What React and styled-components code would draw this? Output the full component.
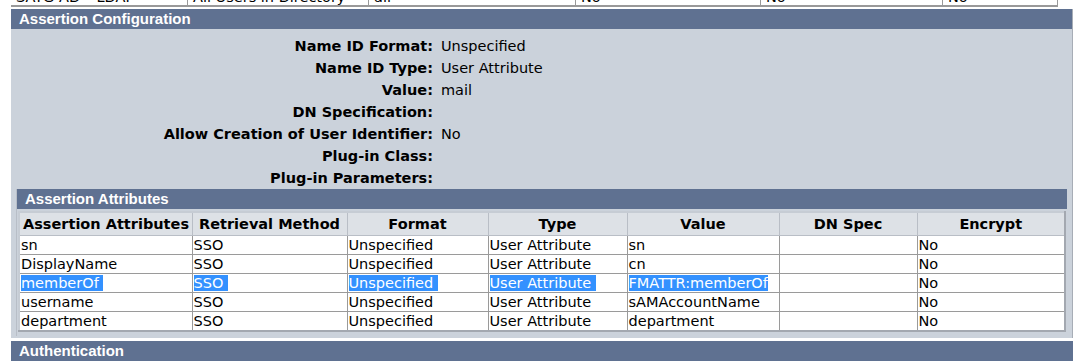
import React from 'react'
import styled, { createGlobalStyle } from 'styled-components'

const GlobalStyle = createGlobalStyle`
    html, body {
        margin: 0;
        padding: 0;
        background: #fff;
    }
    body {
        font-family: "DejaVu Sans", Verdana, sans-serif;
        font-size: 14.5px;
        color: #000;
    }
`

const config = [
    ['Name ID Format:', 'Unspecified'],
    ['Name ID Type:', 'User Attribute'],
    ['Value:', 'mail'],
    ['DN Specification:', ''],
    ['Allow Creation of User Identifier:', 'No'],
    ['Plug-in Class:', ''],
    ['Plug-in Parameters:', ''],
]

const columns = [
    ['Assertion Attributes', 173],
    ['Retrieval Method', 155],
    ['Format', 141],
    ['Type', 139],
    ['Value', 152],
    ['DN Spec', 138],
    ['Encrypt', 148],
]

const rows = [
    ['sn', 'SSO', 'Unspecified', 'User Attribute', 'sn', '', 'No'],
    ['DisplayName', 'SSO', 'Unspecified', 'User Attribute', 'cn', '', 'No'],
    ['memberOf', 'SSO', 'Unspecified', 'User Attribute', 'FMATTR:memberOf', '', 'No', true],
    ['username', 'SSO', 'Unspecified', 'User Attribute', 'sAMAccountName', '', 'No'],
    ['department', 'SSO', 'Unspecified', 'User Attribute', 'department', '', 'No'],
]

const App = () => {
    return (
        <StPage>
            <GlobalStyle />
            <StTopTable>
                <tbody>
                    <tr>
                        <StTopCell $w={166}>SATG AD – LDAP</StTopCell>
                        <StTopCell $w={170}>All Users in Directory</StTopCell>
                        <StTopCell $w={196}>all</StTopCell>
                        <StTopCell $w={174}>No</StTopCell>
                        <StTopCell $w={171}>No</StTopCell>
                        <StTopCell>No</StTopCell>
                    </tr>
                </tbody>
            </StTopTable>

            <StPanel>
                <StBar>Assertion Configuration</StBar>
                <StConfigGrid>
                    {config.map(([label, value]) => (
                        <React.Fragment key={label}>
                            <StLabel>{label}</StLabel>
                            <StValue>{value}</StValue>
                        </React.Fragment>
                    ))}
                </StConfigGrid>
                <StSection>
                    <StBar>Assertion Attributes</StBar>
                    <StAttrTable>
                        <colgroup>
                            {columns.map(([name, w]) => <col key={name} style={{ width: w }} />)}
                        </colgroup>
                        <thead>
                            <tr>
                                {columns.map(([name]) => <StTh key={name}>{name}</StTh>)}
                            </tr>
                        </thead>
                        <tbody>
                            {rows.map((r) => (
                                <tr key={r[0]}>
                                    {r.slice(0, 7).map((c, i) => (
                                        <StTd key={i}>
                                            {r[7] && i < 5 ? <StSelected>{c}{i < 4 ? '\u00a0' : ''}</StSelected> : c}
                                        </StTd>
                                    ))}
                                </tr>
                            ))}
                        </tbody>
                    </StAttrTable>
                </StSection>
            </StPanel>

            <StBottomBar>Authentication</StBottomBar>
        </StPage>
    )
}

export default App

const StPage = styled.div`
    width: 1080px;
    height: 362px;
    overflow: hidden;
`
const StTopTable = styled.table`
    width: 1047px;
    margin: -14px 0 0 11px;
    border-collapse: collapse;
    table-layout: fixed;
    border-bottom: 2px solid #999;
`
const StTopCell = styled.td`
    ${(p) => (p.$w ? `width: ${p.$w}px;` : '')}
    height: 13px;
    padding: 3px 5px 0;
    line-height: 16px;
    vertical-align: top;
    border-right: 1px solid #999;
    background: #fff;
    white-space: nowrap;
    overflow: hidden;
`
const StPanel = styled.div`
    margin: 2px 7px 0 11px;
    background: #cbd2db;
    border-right: 1px solid #a7adb6;
    padding-bottom: 2px;
`
const StBar = styled.div`
    height: 20px;
    line-height: 20px;
    padding-left: 8px;
    background: #5f7191;
    color: #fff;
    font-family: "Liberation Sans", Arial, sans-serif;
    font-weight: bold;
    font-size: 15px;
`
const StConfigGrid = styled.div`
    display: grid;
    grid-template-columns: 422px auto;
    column-gap: 8px;
    padding-top: 6px;
    line-height: 22px;
`
const StLabel = styled.div`
    text-align: right;
    font-weight: bold;
    white-space: nowrap;
`
const StValue = styled.div`
    min-height: 22px;
`
const StSection = styled.div`
    margin: 0 5px;
    padding-bottom: 4px;
    border-left: 1px solid #b8bec7;
`
const StAttrTable = styled.table`
    width: 1048px;
    margin: 2px 0 0 1px;
    border-collapse: collapse;
    table-layout: fixed;
    border: 2px solid #a3a8b0;
    border-top-color: #c6ccd4;
    border-left-color: #c6ccd4;
`
const StTh = styled.th`
    height: 22px;
    padding: 0 3px;
    background: #dde1e6;
    border: 1px solid #b9bec6;
    font-weight: bold;
    text-align: center;
    white-space: nowrap;
    overflow: hidden;
`
const StTd = styled.td`
    height: 18px;
    padding: 0 1px;
    background: #fff;
    border: 1px solid #9a9a9a;
    line-height: 18px;
    white-space: nowrap;
    overflow: hidden;
`
const StSelected = styled.span`
    background: #3391ff;
    color: #fff;
`
const StBottomBar = styled(StBar)`
    margin: 3px 7px 0 11px;
`
